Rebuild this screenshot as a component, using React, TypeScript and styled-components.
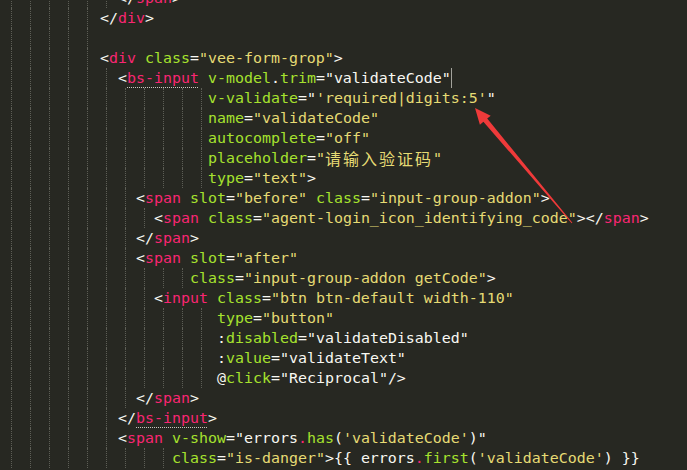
import React from 'react';
import styled, { createGlobalStyle } from 'styled-components';

type Kind = 'p' | 't' | 'a' | 's' | 'u' | 'cjk';
type Tok = [Kind, string];

interface CodeLine {
    indent: number;
    guides?: number;
    tokens: Tok[];
    cursor?: boolean;
}

const lines: CodeLine[] = [
    { indent: 12, tokens: [['p', '</'], ['t', 'span'], ['p', '>']] },
    { indent: 10, tokens: [['p', '</'], ['t', 'div'], ['p', '>']] },
    { indent: 0, guides: 10, tokens: [] },
    { indent: 10, tokens: [['p', '<'], ['t', 'div'], ['p', ' '], ['a', 'class'], ['p', '='], ['s', '"vee-form-grop"'], ['p', '>']] },
    {
        indent: 12,
        cursor: true,
        tokens: [['p', '<'], ['u', 'bs-input'], ['p', ' '], ['a', 'v-model'], ['p', '.'], ['a', 'trim'], ['p', '="validateCode"']],
    },
    { indent: 22, tokens: [['a', 'v-validate'], ['p', '="'], ['s', "'required|digits:5'"], ['p', '"']] },
    { indent: 22, tokens: [['a', 'name'], ['p', '='], ['s', '"validateCode"']] },
    { indent: 22, tokens: [['a', 'autocomplete'], ['p', '='], ['s', '"off"']] },
    { indent: 22, tokens: [['a', 'placeholder'], ['p', '='], ['s', '"'], ['cjk', '请输入验证码'], ['s', '"']] },
    { indent: 22, tokens: [['a', 'type'], ['p', '='], ['s', '"text"'], ['p', '>']] },
    {
        indent: 14,
        tokens: [['p', '<'], ['t', 'span'], ['p', ' '], ['a', 'slot'], ['p', '='], ['s', '"before"'], ['p', ' '], ['a', 'class'], ['p', '='], ['s', '"input-group-addon"'], ['p', '>']],
    },
    {
        indent: 16,
        tokens: [['p', '<'], ['t', 'span'], ['p', ' '], ['a', 'class'], ['p', '='], ['s', '"agent-login_icon_identifying_code"'], ['p', '></'], ['t', 'span'], ['p', '>']],
    },
    { indent: 14, tokens: [['p', '</'], ['t', 'span'], ['p', '>']] },
    { indent: 14, tokens: [['p', '<'], ['t', 'span'], ['p', ' '], ['a', 'slot'], ['p', '='], ['s', '"after"']] },
    { indent: 20, tokens: [['a', 'class'], ['p', '='], ['s', '"input-group-addon getCode"'], ['p', '>']] },
    { indent: 16, tokens: [['p', '<'], ['t', 'input'], ['p', ' '], ['a', 'class'], ['p', '='], ['s', '"btn btn-default width-110"']] },
    { indent: 23, tokens: [['a', 'type'], ['p', '='], ['s', '"button"']] },
    { indent: 23, tokens: [['p', ':'], ['a', 'disabled'], ['p', '="validateDisabled"']] },
    { indent: 23, tokens: [['p', ':'], ['a', 'value'], ['p', '="validateText"']] },
    { indent: 23, tokens: [['p', '@'], ['a', 'click'], ['p', '="Reciprocal"/>']] },
    { indent: 14, tokens: [['p', '</'], ['t', 'span'], ['p', '>']] },
    { indent: 12, tokens: [['p', '</'], ['u', 'bs-input'], ['p', '>']] },
    {
        indent: 12,
        tokens: [['p', '<'], ['t', 'span'], ['p', ' '], ['a', 'v-show'], ['p', '="errors'], ['t', '.'], ['a', 'has'], ['p', '('], ['s', "'validateCode'"], ['p', ')"']],
    },
    {
        indent: 18,
        tokens: [['a', 'class'], ['p', '='], ['s', '"is-danger"'], ['p', '>{{ errors'], ['t', '.'], ['a', 'first'], ['p', '('], ['s', "'validateCode'"], ['p', ') }}']],
    },
];

const colors: Record<Kind, string> = {
    p: '#f8f8f2',
    t: '#f92672',
    u: '#f92672',
    a: '#a6e22e',
    s: '#e6db74',
    cjk: '#e6db74',
};

const App: React.FC = () => {
    return (
        <>
            <GlobalStyle />
            <Editor>
                <CodeBody>
                    {lines.map((line, i) => (
                        <Line key={i}>
                            <Indent $cols={line.indent || line.guides || 0}>
                                {Array.from({ length: Math.ceil((line.guides ?? line.indent) / 2) }).map((_, g) => (
                                    <Guide key={g} />
                                ))}
                            </Indent>
                            {line.tokens.map(([kind, text], j) => (
                                <Token key={j} $kind={kind}>
                                    {text}
                                </Token>
                            ))}
                            {line.cursor && <Cursor />}
                        </Line>
                    ))}
                </CodeBody>
                <Arrow width='687' height='470' viewBox='0 0 687 470'>
                    <polygon
                        points='475,108 490.7,115.7 487.2,118.6 572.4,222.7 571.6,223.3 483.4,121.8 479.9,124.7'
                        fill='#ef3a3a'
                    />
                </Arrow>
            </Editor>
        </>
    );
};

export default App;

const GlobalStyle = createGlobalStyle`
    html, body {
        margin : 0;
        padding : 0;
        background : #272822;
    }
`

const Editor = styled.div`
    position : relative;
    width : 687px;
    height : 470px;
    overflow : hidden;
    background : #272822;
    font-family : "DejaVu Sans Mono", "Liberation Mono", monospace;
    font-size : 14.95px;
`

const CodeBody = styled.div`
    margin-top : -12px;
    padding-left : 10px;
`

const Line = styled.div`
    display : flex;
    height : 20px;
    line-height : 20px;
    white-space : pre;
`

const Indent = styled.span<{ $cols: number }>`
    display : flex;
    flex : none;
    width : ${p => p.$cols * 9}px;
    height : 20px;
    overflow : hidden;
`

const Guide = styled.span`
    flex : none;
    width : 17px;
    margin-left : 1px;
    border-left : 1px dotted #5d5e56;
`

const Token = styled.span<{ $kind: Kind }>`
    color : ${p => colors[p.$kind]};
    ${p => p.$kind === 'u' && `
        height : 20px;
        background-image : linear-gradient(to right, #c8c8c0 50%, transparent 50%);
        background-size : 2px 1px;
        background-repeat : repeat-x;
        background-position : 0 19px;
    `}
    ${p => p.$kind === 'cjk' && `
        font-family : "Noto Sans CJK SC", sans-serif;
        font-size : 16px;
        letter-spacing : 2px;
    `}
`

const Cursor = styled.span`
    flex : none;
    width : 1px;
    height : 20px;
    background : #a3a39c;
`

const Arrow = styled.svg`
    position : absolute;
    left : 0;
    top : 0;
    pointer-events : none;
`
